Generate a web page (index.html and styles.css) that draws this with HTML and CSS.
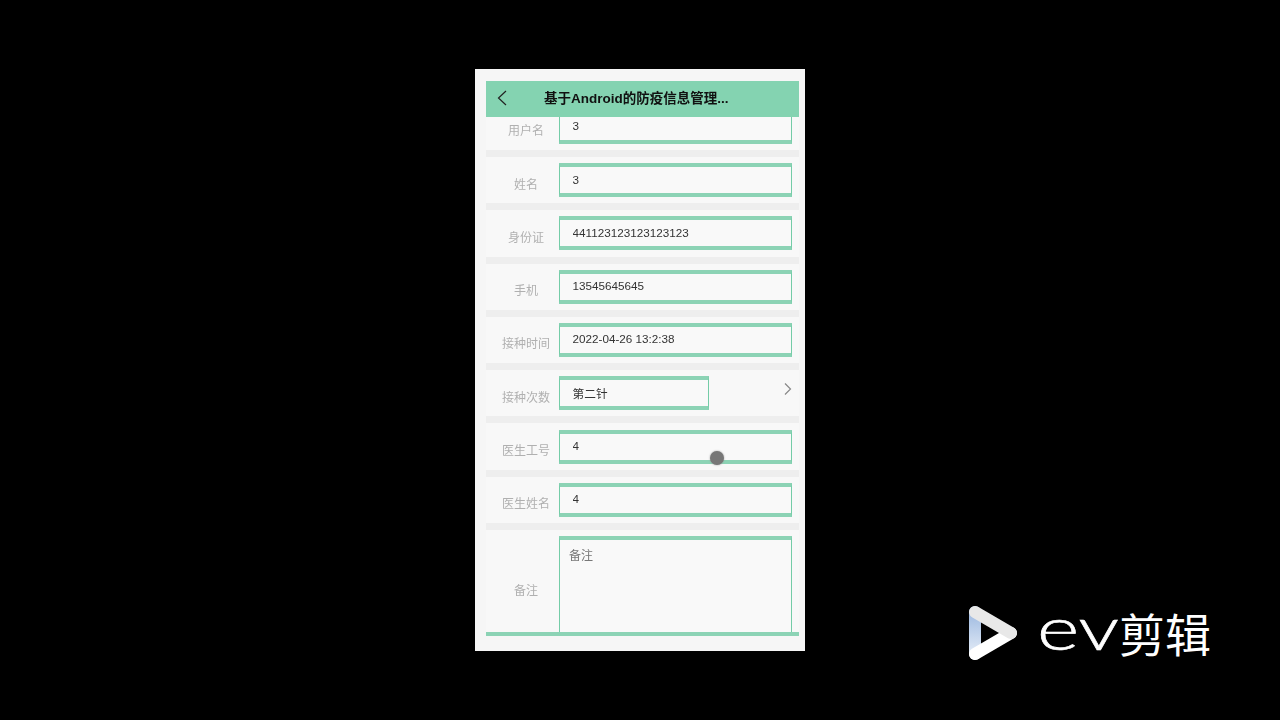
FILE: index.html
```html
<!DOCTYPE html>
<html lang="en">
  <head>
    <meta charset="UTF-8" />
    <title>防疫信息管理</title>
    <link rel="stylesheet" href="styles.css">
  </head>
  <body>
    <div class="phone">
      <div class="header">
        <svg class="back-icon" width="12" height="18" viewBox="0 0 12 18"><path d="M10 2 L2.5 9 L10 16" fill="none" stroke="#222" stroke-width="1.2"/></svg>
        <h1 class="title">基于Android的防疫信息管理...</h1>
      </div>
      <div class="form">
        <div class="form-list">
          <div class="row">
            <label class="row-label">用户名</label>
            <input class="field" value="3">
          </div>
          <div class="row">
            <label class="row-label">姓名</label>
            <input class="field" value="3">
          </div>
          <div class="row">
            <label class="row-label">身份证</label>
            <input class="field" value="441123123123123123">
          </div>
          <div class="row">
            <label class="row-label">手机</label>
            <input class="field" value="13545645645">
          </div>
          <div class="row">
            <label class="row-label">接种时间</label>
            <input class="field" value="2022-04-26 13:2:38">
          </div>
          <div class="row">
            <label class="row-label">接种次数</label>
            <input class="field field-short" value="第二针">
            <svg class="more-icon" width="10" height="14" viewBox="0 0 10 14"><path d="M2 1.5 L7.5 7 L2 12.5" fill="none" stroke="#888" stroke-width="1.2"/></svg>
          </div>
          <div class="row">
            <label class="row-label">医生工号</label>
            <input class="field" value="4">
          </div>
          <div class="row">
            <label class="row-label">医生姓名</label>
            <input class="field" value="4">
          </div>
          <div class="row row-note">
            <label class="row-label">备注</label>
            <textarea class="note" placeholder="备注"></textarea>
          </div>
        </div>
      </div>
    </div>
    <div class="touch-dot"></div>
    <div class="watermark">
      <svg class="watermark-icon" width="50" height="56" viewBox="0 0 50 56">
        <defs>
          <linearGradient id="barFill" gradientUnits="userSpaceOnUse" x1="0" y1="6" x2="0" y2="50">
            <stop offset="0" stop-color="#9db9e0"/>
            <stop offset="1" stop-color="#e4ecf7"/>
          </linearGradient>
        </defs>
        <path d="M7 7 L7 49" stroke="url(#barFill)" stroke-width="12" stroke-linecap="round"/>
        <path d="M7 49 L43 28" stroke="#fff" stroke-width="12" stroke-linecap="round"/>
        <path d="M7 7 L43 28" stroke="#e8e8e8" stroke-width="12" stroke-linecap="round"/>
      </svg>
      <span class="watermark-ev">ev</span>
      <span class="watermark-name">剪辑</span>
    </div>
  </body>
</html>
```

FILE: styles.css
```css
body {
  margin: 0;
  height: 720px;
  background: #000;
  overflow: hidden;
  font-family: "Liberation Sans", "Noto Sans CJK SC", sans-serif;
}
.phone {
  box-sizing: border-box;
  width: 330px;
  height: 582px;
  margin: 69px 0 0 475px;
  padding: 12px 6px 0 11px;
  background: #f6f6f6;
  filter: blur(0.4px);
}
.header {
  display: flex;
  align-items: center;
  box-sizing: border-box;
  height: 36px;
  padding: 0 0 2px 10px;
  background: #84d3b1;
}
.back-icon {
  flex: none;
}
.title {
  margin: 0 0 2px 36px;
  font-size: 13.5px;
  font-weight: 700;
  color: #111;
}
.form {
  height: 519px;
  overflow: hidden;
}
.form-list {
  margin-top: -13.4px;
  background: #eeeeee;
}
.row {
  display: flex;
  align-items: center;
  box-sizing: border-box;
  height: 46.3px;
  margin-bottom: 7px;
  background: #f8f8f8;
}
.row-label {
  flex: none;
  width: 73px;
  padding: 6px 0 0 7px;
  box-sizing: border-box;
  text-align: center;
  font-size: 12px;
  color: #b0b0b0;
}
.field {
  box-sizing: border-box;
  width: 233px;
  height: 34px;
  padding: 0 0 2px 12.5px;
  border-style: solid;
  border-color: #8cd3b5 #74cca7;
  border-width: 4px 1px;
  border-radius: 0;
  outline: none;
  background: #f9f9f9;
  font-family: inherit;
  font-size: 11.7px;
  color: #333;
}
.field-short {
  width: 150px;
}
.more-icon {
  margin: -8px 0 0 74px;
}
.row-note {
  align-items: flex-start;
  height: 106px;
  margin-bottom: 0;
  padding-top: 6px;
  border-bottom: 4px solid #8cd3b5;
}
.row-note .row-label {
  padding-top: 45px;
}
.note {
  box-sizing: border-box;
  display: block;
  width: 233px;
  height: 96px;
  padding: 6px 9px;
  border-style: solid;
  border-color: #8cd3b5 #74cca7;
  border-width: 4px 1px 0;
  border-radius: 0;
  outline: none;
  resize: none;
  background: #f9f9f9;
  font-family: inherit;
  font-size: 12px;
}
.note::placeholder {
  color: #777;
}
.touch-dot {
  position: absolute;
  left: 710px;
  top: 451px;
  width: 14px;
  height: 14px;
  border-radius: 50%;
  background: #777;
  box-shadow: 0 0 2px #999;
}
.watermark {
  position: absolute;
  left: 968px;
  top: 602px;
  display: flex;
  align-items: center;
  color: #fff;
}
.watermark-ev {
  display: inline-block;
  width: 82px;
  margin: -12px 0 0 19px;
  font-family: "Lato", sans-serif;
  font-weight: 300;
  font-size: 60px;
  line-height: 56px;
  -webkit-text-stroke: 0.6px #fff;
  transform: scaleX(1.35);
  transform-origin: left center;
}
.watermark-name {
  margin: 6px 0 0 0;
  font-size: 46px;
  line-height: 56px;
}
```
